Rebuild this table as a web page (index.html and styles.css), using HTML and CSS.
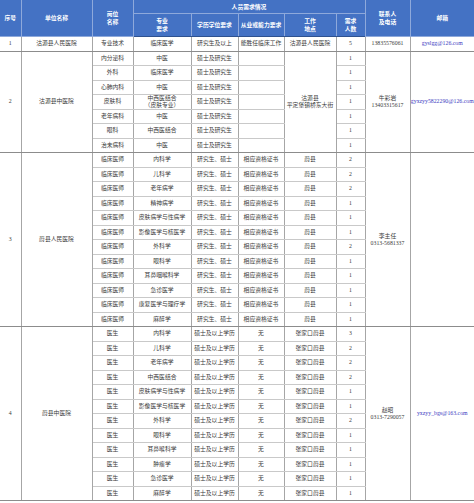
FILE: index.html
```html
<!DOCTYPE html>
<html lang="zh">
<head>
<meta charset="utf-8">
<link rel="stylesheet" href="styles.css">
</head>
<body>
<table class="grid">
<colgroup>
<col class="c1"><col class="c2"><col class="c3"><col class="c4"><col class="c5"><col class="c6"><col class="c7"><col class="c8"><col class="c9"><col class="c10">
</colgroup>
<thead>
<tr class="h1">
<th rowspan="2">序号</th>
<th rowspan="2">单位名称</th>
<th rowspan="2">岗位<br>名称</th>
<th colspan="5">人员需求情况</th>
<th rowspan="2">联系人<br>及电话</th>
<th rowspan="2" class="last">邮箱</th>
</tr>
<tr class="h2">
<th>专业<br>要求</th>
<th>学历学位要求</th>
<th>从业或能力要求</th>
<th>工作<br>地点</th>
<th>需求<br>人数</th>
</tr>
</thead>
<tbody class="s1">
<tr class="first"><td>1</td><td>沽源县人民医院</td><td>专业技术</td><td>临床医学</td><td>研究生及以上</td><td>能胜任临床工作</td><td>沽源县人民医院</td><td>5</td><td>13835576061</td><td class="mail last">gyslgg@126.com</td></tr>
</tbody>
<tbody>
<tr><td rowspan="7" class="m">2</td><td rowspan="7" class="m">沽源县中医院</td><td>内分泌科</td><td>中医</td><td>硕士及研究生</td><td></td><td rowspan="7" class="m">沽源县<br>平定堡镇桥东大街</td><td>1</td><td rowspan="7" class="m">牛彩岩<br>13403315617</td><td rowspan="7" class="m mail last">gyxzyy5822290@126.com</td></tr>
<tr><td>外科</td><td>临床医学</td><td>硕士及研究生</td><td></td><td>1</td></tr>
<tr><td>心肺内科</td><td>中医</td><td>硕士及研究生</td><td></td><td>1</td></tr>
<tr><td>皮肤科</td><td class="two">中西医结合<br>（皮肤专业）</td><td>硕士及研究生</td><td></td><td>1</td></tr>
<tr><td>老年病科</td><td>中医</td><td>硕士及研究生</td><td></td><td>1</td></tr>
<tr><td>眼科</td><td>中西医结合</td><td>硕士及研究生</td><td></td><td>1</td></tr>
<tr><td>治未病科</td><td>中医</td><td>硕士及研究生</td><td></td><td>1</td></tr>
</tbody>
<tbody>
<tr><td rowspan="12" class="m">3</td><td rowspan="12" class="m">蔚县人民医院</td><td>临床医师</td><td>内科学</td><td>研究生、硕士</td><td>相应资格证书</td><td>蔚县</td><td>2</td><td rowspan="12" class="m">李主任<br>0313-5681337</td><td rowspan="12" class="m last"></td></tr>
<tr><td>临床医师</td><td>儿科学</td><td>研究生、硕士</td><td>相应资格证书</td><td>蔚县</td><td>2</td></tr>
<tr><td>临床医师</td><td>老年病学</td><td>研究生、硕士</td><td>相应资格证书</td><td>蔚县</td><td>2</td></tr>
<tr><td>临床医师</td><td>精神病学</td><td>研究生、硕士</td><td>相应资格证书</td><td>蔚县</td><td>1</td></tr>
<tr><td>临床医师</td><td>皮肤病学与性病学</td><td>研究生、硕士</td><td>相应资格证书</td><td>蔚县</td><td>1</td></tr>
<tr><td>临床医师</td><td>影像医学与核医学</td><td>研究生、硕士</td><td>相应资格证书</td><td>蔚县</td><td>1</td></tr>
<tr><td>临床医师</td><td>外科学</td><td>研究生、硕士</td><td>相应资格证书</td><td>蔚县</td><td>2</td></tr>
<tr><td>临床医师</td><td>眼科学</td><td>研究生、硕士</td><td>相应资格证书</td><td>蔚县</td><td>1</td></tr>
<tr><td>临床医师</td><td>耳鼻咽喉科学</td><td>研究生、硕士</td><td>相应资格证书</td><td>蔚县</td><td>1</td></tr>
<tr><td>临床医师</td><td>急诊医学</td><td>研究生、硕士</td><td>相应资格证书</td><td>蔚县</td><td>1</td></tr>
<tr><td>临床医师</td><td>康复医学与理疗学</td><td>研究生、硕士</td><td>相应资格证书</td><td>蔚县</td><td>1</td></tr>
<tr><td>临床医师</td><td>麻醉学</td><td>研究生、硕士</td><td>相应资格证书</td><td>蔚县</td><td>1</td></tr>
</tbody>
<tbody>
<tr><td rowspan="12" class="m">4</td><td rowspan="12" class="m">蔚县中医院</td><td>医生</td><td>内科学</td><td>硕士及以上学历</td><td>无</td><td>张家口蔚县</td><td>3</td><td rowspan="12" class="m">赵昭<br>0313-7290057</td><td rowspan="12" class="m mail last">yxzyy_bgs@163.com</td></tr>
<tr><td>医生</td><td>儿科学</td><td>硕士及以上学历</td><td>无</td><td>张家口蔚县</td><td>2</td></tr>
<tr><td>医生</td><td>老年病学</td><td>硕士及以上学历</td><td>无</td><td>张家口蔚县</td><td>2</td></tr>
<tr><td>医生</td><td>中西医结合</td><td>硕士及以上学历</td><td>无</td><td>张家口蔚县</td><td>2</td></tr>
<tr><td>医生</td><td>皮肤病学与性病学</td><td>硕士及以上学历</td><td>无</td><td>张家口蔚县</td><td>1</td></tr>
<tr><td>医生</td><td>影像医学与核医学</td><td>硕士及以上学历</td><td>无</td><td>张家口蔚县</td><td>1</td></tr>
<tr><td>医生</td><td>外科学</td><td>硕士及以上学历</td><td>无</td><td>张家口蔚县</td><td>2</td></tr>
<tr><td>医生</td><td>眼科学</td><td>硕士及以上学历</td><td>无</td><td>张家口蔚县</td><td>1</td></tr>
<tr><td>医生</td><td>耳鼻喉科学</td><td>硕士及以上学历</td><td>无</td><td>张家口蔚县</td><td>1</td></tr>
<tr><td>医生</td><td>肿瘤学</td><td>硕士及以上学历</td><td>无</td><td>张家口蔚县</td><td>1</td></tr>
<tr><td>医生</td><td>急诊医学</td><td>硕士及以上学历</td><td>无</td><td>张家口蔚县</td><td>1</td></tr>
<tr><td>医生</td><td>麻醉学</td><td>硕士及以上学历</td><td>无</td><td>张家口蔚县</td><td>1</td></tr>
</tbody>
</table>
</body>
</html>
```
FILE: styles.css
```css
html, body {
  margin: 0;
  padding: 0;
  background: #ffffff;
}
body {
  overflow: hidden;
}
.grid {
  width: 474px;
  table-layout: fixed;
  border-collapse: collapse;
  font-family: "Liberation Serif", "Noto Sans CJK SC", serif;
  font-size: 5.8px;
  color: #3a3a3a;
}
.c1 { width: 21px; }
.c2 { width: 71px; }
.c3 { width: 41px; }
.c4 { width: 58px; }
.c5 { width: 47px; }
.c6 { width: 46px; }
.c7 { width: 52px; }
.c8 { width: 29px; }
.c9 { width: 45px; }
.c10 { width: 64px; }

th {
  background: #4472c4;
  color: #ffffff;
  font-family: "Noto Sans CJK SC", sans-serif;
  font-weight: 700;
  font-size: 5.8px;
  line-height: 8px;
  padding: 0;
  text-align: center;
  vertical-align: middle;
  border-right: 1px solid #8ea9db;
  border-bottom: 1px solid #8ea9db;
}
th.last { border-right: none; }
.h1 th { height: 13px; }
.h2 th { height: 22px; border-bottom: 1px solid #2f528f; }

td {
  padding: 0;
  height: 13.5px;
  text-align: center;
  vertical-align: middle;
  white-space: nowrap;
  overflow: hidden;
  line-height: 7px;
  border-right: 1px solid #a6a6a6;
  border-bottom: 1px solid #c9c9c9;
}
td.last { border-right: none; }
td.m,
tbody tr:last-child td {
  border-bottom-color: #8c8c8c;
}
.s1 td { height: 13.7px; }
.two { line-height: 6.6px; }
.mail {
  color: #3b3bbf;
  font-size: 5.8px;
}
```
